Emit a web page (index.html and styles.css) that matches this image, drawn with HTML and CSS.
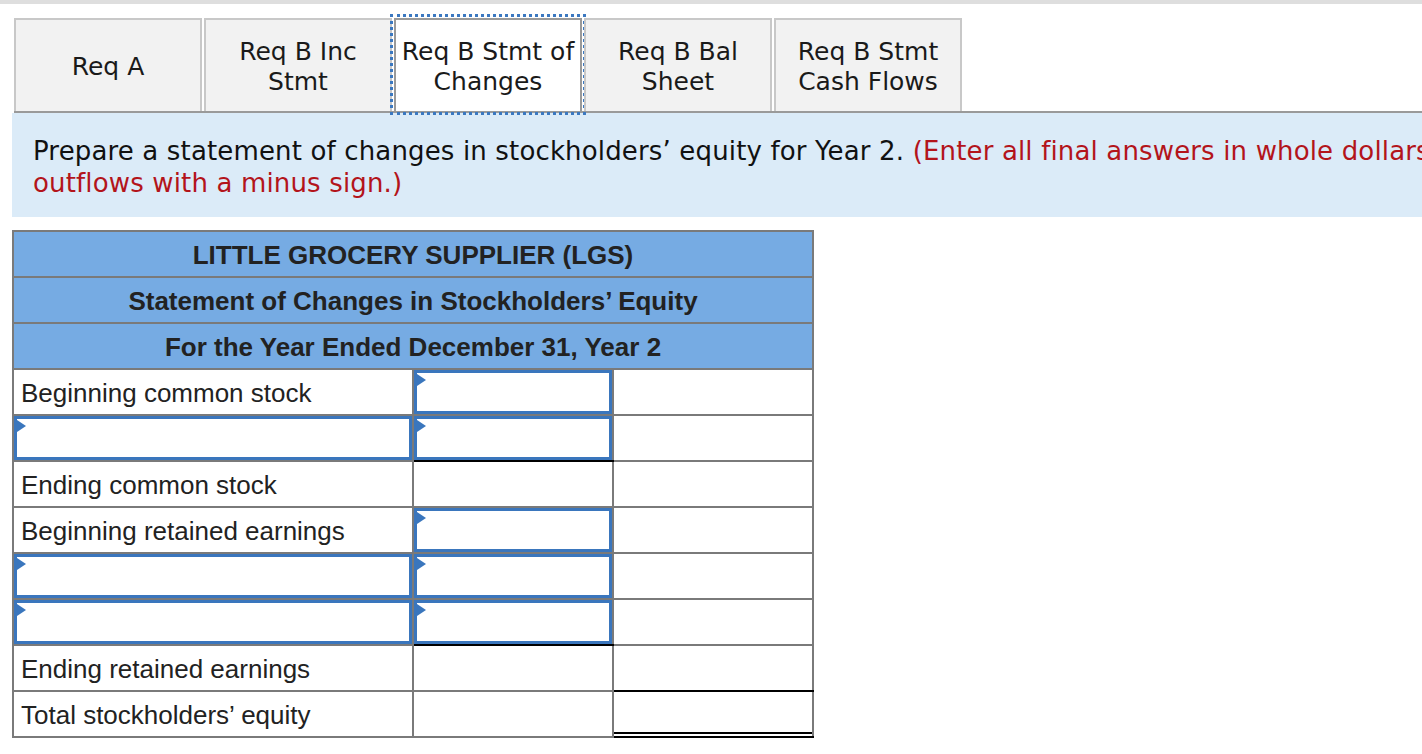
FILE: index.html
```html
<!DOCTYPE html>
<html lang="en">
<head>
<meta charset="utf-8">
<title>Statement of Changes</title>
<link rel="stylesheet" href="styles.css">
</head>
<body>
<div class="topbar"></div>
<nav class="tabs">
  <div class="tab">Req A</div>
  <div class="tab">Req B Inc<br>Stmt</div>
  <div class="tab active">Req B Stmt of<br>Changes</div>
  <div class="tab">Req B Bal<br>Sheet</div>
  <div class="tab">Req B Stmt<br>Cash Flows</div>
</nav>
<div class="info">
  <p>Prepare a statement of changes in stockholders’ equity for Year 2. <span class="red">(Enter all final answers in whole dollars and cash<br>outflows with a minus sign.)</span></p>
</div>
<table class="stmt">
  <colgroup><col class="c1"><col class="c2"><col class="c3"></colgroup>
  <thead>
    <tr><th colspan="3">LITTLE GROCERY SUPPLIER (LGS)</th></tr>
    <tr><th colspan="3">Statement of Changes in Stockholders’ Equity</th></tr>
    <tr><th colspan="3">For the Year Ended December 31, Year 2</th></tr>
  </thead>
  <tbody>
    <tr><td class="label">Beginning common stock</td><td><div class="inp"></div></td><td></td></tr>
    <tr><td><div class="inp"></div></td><td class="under"><div class="inp"></div></td><td></td></tr>
    <tr><td class="label">Ending common stock</td><td></td><td></td></tr>
    <tr><td class="label">Beginning retained earnings</td><td><div class="inp"></div></td><td></td></tr>
    <tr><td><div class="inp"></div></td><td><div class="inp"></div></td><td></td></tr>
    <tr><td><div class="inp"></div></td><td class="under"><div class="inp"></div></td><td></td></tr>
    <tr><td class="label">Ending retained earnings</td><td></td><td class="under"></td></tr>
    <tr><td class="label">Total stockholders’ equity</td><td></td><td class="dbl"></td></tr>
  </tbody>
</table>
</body>
</html>
```
FILE: styles.css
```css
html, body {
  margin: 0;
  padding: 0;
}
body {
  width: 1422px;
  height: 754px;
  overflow: hidden;
  background: #fff;
  font-family: "DejaVu Sans", Verdana, sans-serif;
  color: #111;
}
.topbar {
  height: 4px;
  background: #dedede;
}
.tabs {
  display: flex;
  gap: 2px;
  margin: 14px 0 0 14px;
  border-bottom: 2px solid #9a9a9a;
}
.tab {
  width: 188px;
  height: 93px;
  box-sizing: border-box;
  display: flex;
  align-items: center;
  justify-content: center;
  text-align: center;
  background: #f2f2f2;
  border: 2px solid #c8c8c8;
  border-bottom: none;
  padding-top: 2px;
  font-size: 25px;
  line-height: 30px;
  color: #1a1a1a;
}
.tab.active {
  background: #fff;
  border-color: #9a9a9a;
  outline: 3px dotted #3b78c0;
  outline-offset: 1px;
}
.info {
  margin-left: 12px;
  width: 1500px;
  background: #dbebf8;
  padding: 22px 0 18px 21px;
}
.info p {
  margin: 0;
  font-size: 26px;
  letter-spacing: 0.15px;
  line-height: 32px;
  white-space: nowrap;
  color: #111;
}
.red {
  color: #b3141b;
}
.stmt {
  margin: 13px 0 0 12px;
  border-collapse: collapse;
  font-family: "Liberation Sans", Arial, sans-serif;
  font-size: 26px;
  color: #222;
}
.c1 { width: 400px; }
.c2 { width: 200px; }
.c3 { width: 200px; }
.stmt th, .stmt td {
  border: 2px solid #7a7a7a;
  padding: 0;
  box-sizing: border-box;
}
.stmt th {
  background: #76abe3;
  font-weight: bold;
  text-align: center;
  height: 46px;
  padding-top: 2px;
}
.stmt td {
  height: 46px;
  vertical-align: middle;
}
.stmt td.label {
  padding: 2px 0 0 7px;
}
.stmt td.under {
  border-bottom: 2px solid #000;
}
.stmt td.dbl {
  border-bottom: 2px solid #000;
  background: linear-gradient(to top, transparent 0 2px, #000 2px 4px, transparent 4px) no-repeat bottom / 100% 6px;
}
.inp {
  position: relative;
  height: 44px;
  box-sizing: border-box;
  border: 3px solid #3a76bd;
  background: #fff;
}
.inp::before {
  content: "";
  position: absolute;
  left: 0;
  top: 1px;
  border-top: 6px solid transparent;
  border-bottom: 6px solid transparent;
  border-left: 9px solid #3a76bd;
}
```
